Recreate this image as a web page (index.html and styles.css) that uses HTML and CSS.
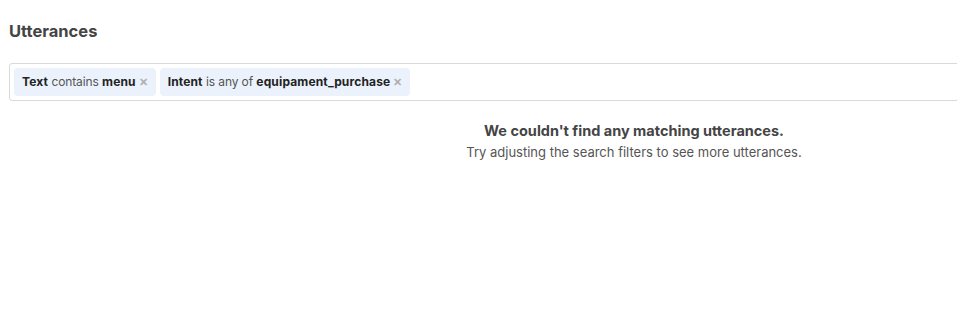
FILE: index.html
```html
<!DOCTYPE html>
<html lang="en">
<head>
    <meta charset="UTF-8">
    <meta name="viewport" content="width=device-width, initial-scale=1.0">
    <title>Utterances</title>
    <link rel="stylesheet" href="styles.css">
</head>
<body>

    <div class="page">
        <!-- Header -->
        <h1 class="title">Utterances</h1>

        <!-- Filter bar -->
        <div class="filters">
            <span class="chip"><strong>Text</strong> contains <strong>menu</strong><span class="chip-close">&#x2715;</span></span>
            <span class="chip"><strong>Intent</strong> is any of <strong>equipament_purchase</strong><span class="chip-close">&#x2715;</span></span>
        </div>

        <!-- Empty state -->
        <div class="empty">
            <p class="empty-title">We couldn't find any matching utterances.</p>
            <p class="empty-text">Try adjusting the search filters to see more utterances.</p>
        </div>
    </div>

</body>
</html>
```

FILE: styles.css
```css
* {
    margin: 0;
    padding: 0;
    box-sizing: border-box;
}

html, body {
    overflow: hidden;
}

body {
    font-family: Inter, 'Liberation Sans', sans-serif;
    background-color: #fff;
    color: #333;
}

.page {
    width: 1250px;
    margin-left: 9px;
    padding-top: 21px;
}

.title {
    font-size: 16.5px;
    font-weight: 700;
    color: #444;
    line-height: 20px;
    margin-bottom: 22px;
}

.filters {
    display: flex;
    gap: 4px;
    align-items: center;
    height: 38px;
    padding: 0 4px;
    border: 1px solid #d9d9d9;
    border-radius: 3px;
}

.chip {
    display: inline-block;
    height: 28px;
    line-height: 28px;
    padding: 0 8px;
    background-color: #ebf2fc;
    border-radius: 4px;
    font-size: 12px;
    letter-spacing: -0.1px;
    color: #555;
    white-space: nowrap;
}

.chip strong {
    font-weight: 700;
    letter-spacing: 0.15px;
    color: #222;
}

.chip-close {
    color: #b0b0b0;
    font-size: 11px;
    font-weight: 700;
    margin-left: 3px;
}

.empty {
    margin-top: 21px;
    text-align: center;
}

.empty-title {
    font-size: 14.5px;
    font-weight: 700;
    color: #444;
    line-height: 18px;
}

.empty-text {
    font-size: 13px;
    color: #555;
    line-height: 18px;
    margin-top: 3px;
}
```
